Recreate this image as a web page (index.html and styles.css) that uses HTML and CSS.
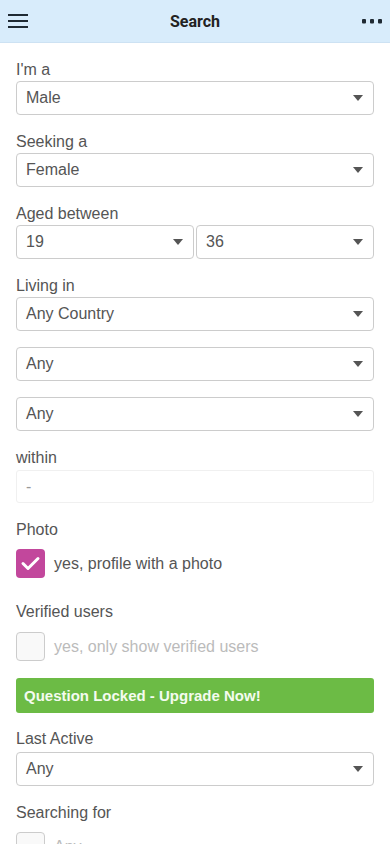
FILE: index.html
```html
<!DOCTYPE html>
<html lang="en">
<head>
<meta charset="utf-8">
<title>Search</title>
<link rel="stylesheet" href="styles.css">
</head>
<body>
<header class="topbar">
  <svg class="menu" width="20" height="14" viewBox="0 0 20 14"><rect x="0" y="0" width="20" height="2" fill="#1f2a33"/><rect x="0" y="6" width="20" height="2" fill="#1f2a33"/><rect x="0" y="12" width="20" height="2" fill="#1f2a33"/></svg>
  <h1 class="title">Search</h1>
  <svg class="more" width="20" height="5" viewBox="0 0 20 5"><rect x="0" y="0" width="4" height="4.5" rx="1" fill="#1f2a33"/><rect x="8" y="0" width="4" height="4.5" rx="1" fill="#1f2a33"/><rect x="16" y="0" width="4" height="4.5" rx="1" fill="#1f2a33"/></svg>
</header>
<main class="form">
  <div class="field">
    <div class="label">I'm a</div>
    <div class="select"><span>Male</span><svg class="caret" width="10" height="6" viewBox="0 0 10 6"><path d="M0 0H10L5 6Z" fill="#555"/></svg></div>
  </div>
  <div class="field">
    <div class="label">Seeking a</div>
    <div class="select"><span>Female</span><svg class="caret" width="10" height="6" viewBox="0 0 10 6"><path d="M0 0H10L5 6Z" fill="#555"/></svg></div>
  </div>
  <div class="field">
    <div class="label">Aged between</div>
    <div class="pair">
      <div class="select"><span>19</span><svg class="caret" width="10" height="6" viewBox="0 0 10 6"><path d="M0 0H10L5 6Z" fill="#555"/></svg></div>
      <div class="select"><span>36</span><svg class="caret" width="10" height="6" viewBox="0 0 10 6"><path d="M0 0H10L5 6Z" fill="#555"/></svg></div>
    </div>
  </div>
  <div class="field">
    <div class="label">Living in</div>
    <div class="select"><span>Any Country</span><svg class="caret" width="10" height="6" viewBox="0 0 10 6"><path d="M0 0H10L5 6Z" fill="#555"/></svg></div>
  </div>
  <div class="field">
    <div class="select"><span>Any</span><svg class="caret" width="10" height="6" viewBox="0 0 10 6"><path d="M0 0H10L5 6Z" fill="#555"/></svg></div>
  </div>
  <div class="field">
    <div class="select"><span>Any</span><svg class="caret" width="10" height="6" viewBox="0 0 10 6"><path d="M0 0H10L5 6Z" fill="#555"/></svg></div>
  </div>
  <div class="field">
    <div class="label">within</div>
    <div class="input">-</div>
  </div>
  <div class="field field-photo">
    <div class="label">Photo</div>
    <div class="check-row">
      <span class="box checked"><svg width="29" height="29" viewBox="0 0 29 29"><path d="M7 14.5L12 19.5L22 9.5" fill="none" stroke="#fff" stroke-width="3" stroke-linecap="round" stroke-linejoin="round"/></svg></span>
      <span class="check-text">yes, profile with a photo</span>
    </div>
  </div>
  <div class="field field-verified">
    <div class="label">Verified users</div>
    <div class="check-row check-row-b">
      <span class="box"></span>
      <span class="check-text disabled">yes, only show verified users</span>
    </div>
  </div>
  <div class="locked">Question Locked - Upgrade Now!</div>
  <div class="field">
    <div class="label">Last Active</div>
    <div class="select select-gap"><span>Any</span><svg class="caret" width="10" height="6" viewBox="0 0 10 6"><path d="M0 0H10L5 6Z" fill="#555"/></svg></div>
  </div>
  <div class="field">
    <div class="label">Searching for</div>
    <div class="check-row check-row-c">
      <span class="box"></span>
      <span class="check-text disabled">Any</span>
    </div>
  </div>
</main>
</body>
</html>
```
FILE: styles.css
```css
* { box-sizing: border-box; }
html, body { margin: 0; padding: 0; }
body {
  background: #fff;
  font-family: "Liberation Sans", Arial, sans-serif;
  font-size: 16px;
  color: #555;
  overflow: hidden;
  height: 844px;
}
.topbar {
  height: 43px;
  background: #d8ecfb;
  border-bottom: 1px solid #cde2f3;
  display: flex;
  align-items: center;
  justify-content: space-between;
  padding: 0 8px;
}
.menu { display: block; }
.more { display: block; }
.title {
  margin: 0;
  font-family: Roboto, "Liberation Sans", sans-serif;
  font-size: 16px;
  font-weight: 700;
  color: #222;
}
.form {
  padding: 16px 16px 0;
}
.field { margin-bottom: 16px; }
.field-photo { margin-bottom: 23px; }
.field-verified { margin-bottom: 17px; }
.label {
  line-height: 22px;
  height: 22px;
  color: #555;
}
.select {
  height: 34px;
  border: 1px solid #ccc;
  border-radius: 4px;
  display: flex;
  align-items: center;
  justify-content: space-between;
  padding: 0 10px 0 9px;
  color: #555;
  background: #fff;
}
.select-gap { margin-top: 2px; }
.caret { display: block; }
.pair {
  display: flex;
  gap: 2px;
}
.pair .select { flex: 1; }
.input {
  height: 33px;
  border: 1px solid #f0f0f0;
  border-radius: 3px;
  padding: 0 9px;
  line-height: 31px;
  color: #999;
  margin-top: 1px;
}
.check-row {
  display: flex;
  align-items: center;
  padding-top: 8px;
}
.check-row-b { padding-top: 9px; }
.check-row-c { padding-top: 8px; }
.box {
  width: 29px;
  height: 29px;
  border: 1px solid #ccc;
  border-radius: 4px;
  background: #f9f9f9;
  flex: none;
  display: block;
}
.box.checked {
  border: none;
  background: #c2479c;
}
.box svg { display: block; }
.check-text {
  margin-left: 9px;
  color: #555;
}
.check-text.disabled { color: #bbb; }
.locked {
  height: 35px;
  background: #6cbb45;
  border-radius: 3px;
  color: #f4fbef;
  font-size: 15px;
  font-weight: 700;
  line-height: 35px;
  padding: 0 8px;
  margin-bottom: 15px;
}
```
